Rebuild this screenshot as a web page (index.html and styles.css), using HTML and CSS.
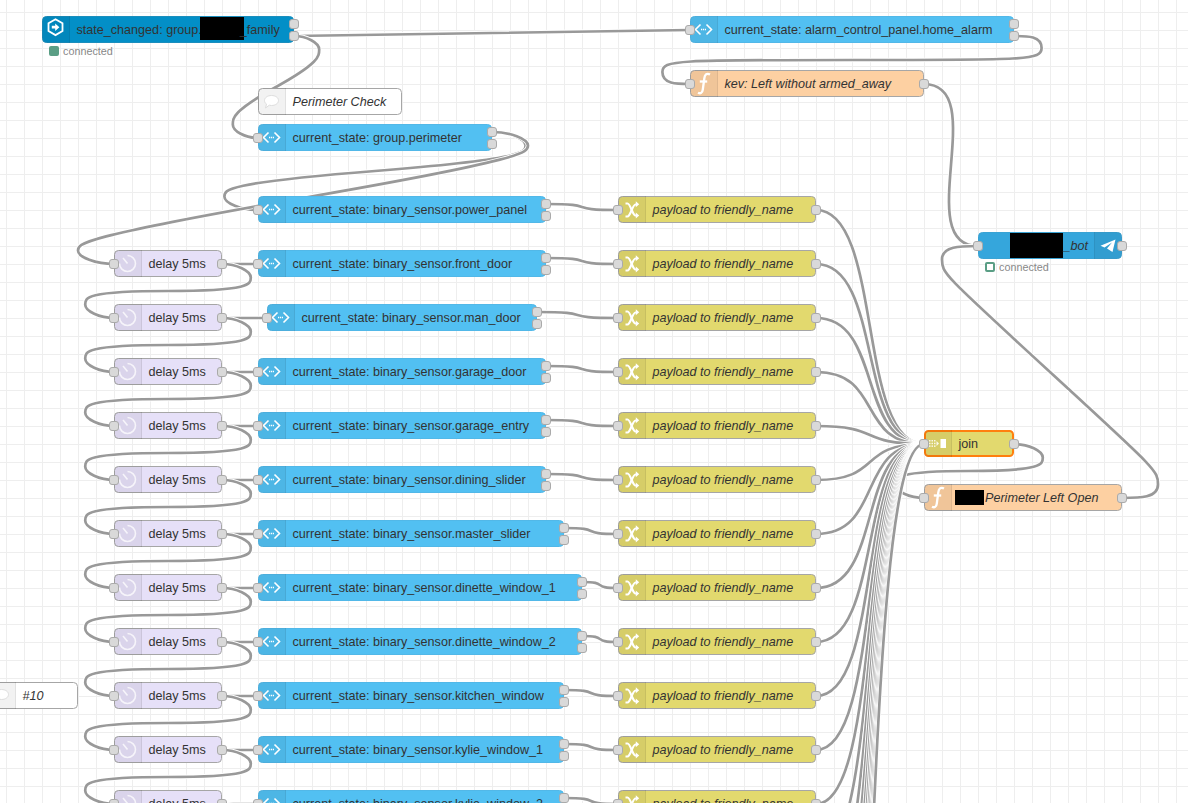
FILE: index.html
```html
<!DOCTYPE html>
<html lang="en">
<head>
    <meta charset="UTF-8">
    <title>Node-RED flow</title>
    <link rel="stylesheet" href="styles.css">
</head>
<body>
    <div id="workspace" class="workspace">
        <svg id="wires" class="wires" width="1188" height="803"></svg>
    </div>
    <script src="app.js"></script>
</body>
</html>
```

FILE: styles.css
```css
html, body {
    margin: 0;
    height: 100%;
    overflow: hidden;
}
.workspace {
    position: relative;
    width: 1188px;
    height: 803px;
    overflow: hidden;
    background-color: #fff;
    background-image:
        linear-gradient(to right, #eee 1px, transparent 1px),
        linear-gradient(to bottom, #eee 1px, transparent 1px);
    background-size: 18px 18px;
    background-position: 6px 12px;
    font-family: "Liberation Sans", Arial, sans-serif;
    font-size: 12.6px;
    color: #333;
}
.wires {
    position: absolute;
    left: 0;
    top: 0;
}
.wire-outline {
    fill: none;
    stroke: #fff;
    stroke-width: 4.5;
}
.wire-line {
    fill: none;
    stroke: #999;
    stroke-width: 2.7;
}
.node {
    position: absolute;
    height: 27px;
    box-sizing: border-box;
    border: 1px solid #a6a6a6;
    border-radius: 4.5px;
    display: flex;
    align-items: center;
}
.node-events { background: #038fc7; border-color: #1b8ebd; }
.node-state { background: #52c0f2; border-color: #52b8e8; }
.node-bot { background: #35a6dc; border-color: #3aa3d4; }
.node-delay { background: #e6e0f8; }
.node-change { background: #e2d96e; }
.node-function { background: #fdd0a2; }
.node-comment { background: #fff; }
.node-selected {
    border: 2px solid #ff7f0e;
}
.icon {
    position: absolute;
    left: -1px;
    top: -1px;
    width: 27px;
    height: 27px;
    background: rgba(0, 0, 0, 0.05);
    border-right: 1px solid rgba(0, 0, 0, 0.07);
    border-radius: 4.5px 0 0 4.5px;
}
.node-selected .icon {
    left: -2px;
    top: -2px;
}
.icon-right {
    left: auto;
    right: -1px;
    border-right: 0;
    border-left: 1px solid rgba(0, 0, 0, 0.07);
    border-radius: 0 4.5px 4.5px 0;
}
.icon svg {
    display: block;
}
.label {
    display: flex;
    align-items: center;
    padding-left: 33.5px;
    padding-top: 1px;
    white-space: pre;
}
.node-selected .label {
    padding-left: 32.5px;
}
.label-right {
    margin-left: auto;
    padding-right: 33px;
    padding-left: 0;
}
.label-tight {
    padding-left: 30px;
}
.italic {
    font-style: italic;
}
.redact {
    background: #000;
}
.port {
    position: absolute;
    width: 10px;
    height: 10px;
    box-sizing: border-box;
    background: #d9d9d9;
    border: 1px solid #aaa;
    border-radius: 3px;
}
.status {
    position: absolute;
    display: flex;
    align-items: center;
    gap: 4px;
    height: 10px;
    font-size: 10.8px;
    color: #888;
}
.status-dot {
    width: 10px;
    height: 10px;
    box-sizing: border-box;
    border: 2px solid #5a9e85;
    border-radius: 2px;
    background: #5a9e85;
}
.status-ring {
    background: #fff;
}
```

FILE: app.js
```js
// node-red flow drawn from data, wires use the editor's own bezier maths
var NODE_W = 90, NODE_H = 27;

var icons = {
    inject: '<path d="M13.500 3.200l7 4v7.900l-7 4-7-4V7.200z" fill="none" stroke="#fff" stroke-width="1.800"/><path d="M9.800 9.800h3.400V7.500l4.200 3.700-4.200 3.700v-2.300H9.800z" fill="#fff"/>',
    api: '<path d="M10.500 8.500L5.500 13.500l5 5M16.500 8.500l5 5-5 5" fill="none" stroke="#fff" stroke-width="1.600"/><path d="M11 13.500h5" stroke="#fff" stroke-width="1.300" stroke-dasharray="1.200 .7"/>',
    delay: '<g fill="none" stroke="#fff" stroke-opacity=".75" stroke-width="1.600"><path d="M13.500 5.500A8 8 0 1 1 5.500 13.500"/><path d="M13.500 13.500L9 8"/></g>',
    change: '<g fill="none" stroke="#fff" stroke-width="2.200"><path d="M7.500 7.500h2c3 0 5 12 8 12h1"/><path d="M7.500 20.500h2c3 0 5-12 8-12h1"/></g><path d="M17.800 5.200l3.400 3-3.400 3zM17.800 16.500l3.400 3-3.400 3z" fill="#fff"/>',
    func: '<g fill="none" stroke="#fff" stroke-width="2.300"><path d="M20 4.500C16.500 2.600 14.700 5 14.300 8.500l-1.500 11c-.4 3.500-2.300 4.500-4.800 3.200"/><path d="M9.800 11.500h7.400"/></g>',
    comment: '<path d="M13.500 7.500c3.900 0 7 2.200 7 5s-3.100 5-7 5c-.8 0-1.500-.1-2.200-.3L7.500 20l1-3.900c-1.300-.9-2-2.200-2-3.600 0-2.800 3.100-5 7-5z" fill="#fff" stroke="#ddd"/>',
    join: '<g fill="#fff" fill-opacity=".85"><rect x="5" y="10" width="1.500" height="1.500"/><rect x="7.500" y="10" width="1.500" height="1.500"/><rect x="10" y="10" width="1.500" height="1.500"/><rect x="5" y="12.700" width="1.500" height="1.500"/><rect x="7.500" y="12.700" width="1.500" height="1.500"/><rect x="10" y="12.700" width="1.500" height="1.500"/><rect x="5" y="15.400" width="1.500" height="1.500"/><rect x="7.500" y="15.400" width="1.500" height="1.500"/><rect x="10" y="15.400" width="1.500" height="1.500"/><path d="M12.500 11l2.500 2.500-2.500 2.500z"/></g><rect x="16.500" y="9" width="5.500" height="9" fill="#fff"/>',
    telegram: '<path d="M20.500 7.500L5.500 13.800l4 1.700 7.500-5-5 6 5.500 3.500z" fill="#fff"/>'
};

var workspace = document.getElementById('workspace');
var wirePaths = [];

function addNode(o) {
    var el = document.createElement('div');
    el.className = 'node node-' + o.kind + (o.selected ? ' node-selected' : '');
    el.style.left = o.x + 'px';
    el.style.top = (o.c - 14) + 'px';
    el.style.width = o.w + 'px';

    var icon = document.createElement('div');
    icon.className = 'icon' + (o.iconRight ? ' icon-right' : '');
    icon.innerHTML = '<svg width="27" height="27" viewBox="0 0 27 27">' + icons[o.icon] + '</svg>';
    el.appendChild(icon);

    var label = document.createElement('div');
    label.className = 'label' + (o.italic ? ' italic' : '') + (o.iconRight ? ' label-right' : '') + (o.tight ? ' label-tight' : '');
    o.text.forEach(function (part) {
        if (typeof part === 'string') {
            var t = document.createElement('span');
            t.textContent = part;
            label.appendChild(t);
        } else {
            var r = document.createElement('span');
            r.className = 'redact';
            r.style.width = part.w + 'px';
            r.style.height = part.h + 'px';
            r.style.margin = part.margin || '0';
            label.appendChild(r);
        }
    });
    el.appendChild(label);
    workspace.appendChild(el);

    if (o.input) addPort(o.x, o.c);
    (o.outputs || []).forEach(function (dy) {
        addPort(o.x + o.w, o.c + dy);
    });
}

function addPort(x, y) {
    var p = document.createElement('div');
    p.className = 'port';
    p.style.left = (x - 5) + 'px';
    p.style.top = (y - 5) + 'px';
    workspace.appendChild(p);
}

function addStatus(x, y, ring) {
    var s = document.createElement('div');
    s.className = 'status';
    s.style.left = x + 'px';
    s.style.top = y + 'px';
    s.innerHTML = '<span class="status-dot' + (ring ? ' status-ring' : '') + '"></span><span>connected</span>';
    workspace.appendChild(s);
}

function wire(ox, oy, dx0, dy0) {
    var dy = dy0 - oy, dx = dx0 - ox;
    var delta = Math.sqrt(dy * dy + dx * dx);
    var scale = 0.75;
    var d;
    if (dx > 0) {
        if (delta < NODE_W) scale = 0.75 - 0.75 * ((NODE_W - delta) / NODE_W);
        d = 'M' + ox + ' ' + oy + ' C' + (ox + NODE_W * scale) + ' ' + oy + ' ' + (dx0 - NODE_W * scale) + ' ' + dy0 + ' ' + dx0 + ' ' + dy0;
    } else {
        scale = 0.4 - 0.2 * Math.max(0, (NODE_W - Math.min(Math.abs(dx), Math.abs(dy))) / NODE_W);
        var midX = Math.floor(dx0 - dx / 2);
        var midY = Math.floor(dy0 - dy / 2);
        if (dy === 0) midY = dy0 + NODE_H;
        var cp = NODE_H / 2;
        var y1 = (dy0 + midY) / 2;
        var topX = ox + NODE_W * scale;
        var topY = dy > 0 ? Math.min(y1 - dy / 2, oy + cp) : Math.max(y1 - dy / 2, oy - cp);
        var botX = dx0 - NODE_W * scale;
        var botY = dy > 0 ? Math.max(y1, dy0 - cp) : Math.min(y1, dy0 + cp);
        var x1 = (ox + topX) / 2;
        var scy = dy > 0 ? 1 : -1;
        var c1 = [topX, dy > 0 ? Math.max(oy, topY - cp) : Math.min(oy, topY + cp)];
        var c2 = [x1, dy > 0 ? Math.min(midY, topY + cp) : Math.max(midY, topY - cp)];
        var c3 = [botX, dy > 0 ? Math.max(midY, botY - cp) : Math.min(midY, botY + cp)];
        if (c2[1] === topY + scy * cp) {
            if (Math.abs(dy) < cp * 10) {
                c1[1] = topY - scy * cp / 2;
                c3[1] = botY - scy * cp / 2;
            }
            c2[0] = topX;
        }
        d = 'M' + ox + ' ' + oy + ' C' + x1 + ' ' + oy + ' ' + c1.join(' ') + ' ' + topX + ' ' + topY +
            ' S' + c2.join(' ') + ' ' + midX + ' ' + midY +
            ' S' + c3.join(' ') + ' ' + botX + ' ' + botY +
            ' S' + ((dx0 + botX) / 2) + ' ' + dy0 + ' ' + dx0 + ' ' + dy0;
    }
    wirePaths.push('<path class="wire-outline" d="' + d + '"/><path class="wire-line" d="' + d + '"/>');
}

// sensor rows, the first has no delay in front of it
var rows = [
    { name: 'power_panel', x: 258, end: 546 },
    { name: 'front_door', x: 258, end: 546 },
    { name: 'man_door', x: 267, end: 537 },
    { name: 'garage_door', x: 258, end: 546 },
    { name: 'garage_entry', x: 258, end: 546 },
    { name: 'dining_slider', x: 258, end: 546 },
    { name: 'master_slider', x: 258, end: 564 },
    { name: 'dinette_window_1', x: 258, end: 582 },
    { name: 'dinette_window_2', x: 258, end: 582 },
    { name: 'kitchen_window', x: 258, end: 564 },
    { name: 'kylie_window_1', x: 258, end: 564 },
    { name: 'kylie_window_2', x: 258, end: 564 }
];
var HIDDEN_ROWS = 10; // rest of the flow, below the fold
var JOIN_IN = [924, 444];

// wires first, they sit under the nodes
wire(294, 36, 690, 30);
wire(294, 36, 258, 138);
wire(1014, 36, 690, 84);
wire(924, 84, 978, 246);
wire(492, 132, 258, 210);
wire(492, 132, 114, 264);
wire(1014, 444, 924, 498);
wire(1122, 498, 978, 246);

rows.forEach(function (r, i) {
    var c = 210 + i * 54;
    if (i > 0) {
        wire(222, c, r.x, c);
        wire(222, c, 114, c + 54);
    }
    wire(r.end, c - 6, 618, c);
});
for (var i = 0; i < rows.length + HIDDEN_ROWS; i++) {
    wire(816, 210 + i * 54, JOIN_IN[0], JOIN_IN[1]);
}
document.getElementById('wires').innerHTML = wirePaths.join('');

addNode({ kind: 'events', icon: 'inject', x: 42, c: 30, w: 252, outputs: [-6, 6],
    text: ['state_changed: group.', { w: 44, h: 23, margin: '-3px -4px 0 -2px' }, '_family'] });
addNode({ kind: 'state', icon: 'api', x: 690, c: 30, w: 324, input: true, outputs: [-6, 6],
    text: ['current_state: alarm_control_panel.home_alarm'] });
addNode({ kind: 'function', icon: 'func', x: 690, c: 84, w: 234, input: true, outputs: [0], italic: true,
    text: ['kev: Left without armed_away'] });
addNode({ kind: 'comment', icon: 'comment', x: 258, c: 102, w: 144, italic: true,
    text: ['Perimeter Check'] });
addNode({ kind: 'state', icon: 'api', x: 258, c: 138, w: 234, input: true, outputs: [-6, 6],
    text: ['current_state: group.perimeter'] });
addNode({ kind: 'comment', icon: 'comment', x: -12, c: 696, w: 90, italic: true,
    text: ['#10'] });
addNode({ kind: 'bot', icon: 'telegram', iconRight: true, x: 978, c: 246, w: 144, input: true, outputs: [0], italic: true,
    text: [{ w: 53, h: 25, margin: '-2px 0 0 0' }, '_bot'] });
addNode({ kind: 'change', icon: 'join', x: 924, c: 444, w: 90, input: true, outputs: [0], selected: true,
    text: ['join'] });
addNode({ kind: 'function', icon: 'func', x: 924, c: 498, w: 198, input: true, outputs: [0], italic: true, tight: true,
    text: [{ w: 29, h: 15, margin: '-2px 1px 0 0' }, 'Perimeter Left Open'] });

rows.forEach(function (r, i) {
    var c = 210 + i * 54;
    if (i > 0) {
        addNode({ kind: 'delay', icon: 'delay', x: 114, c: c, w: 108, input: true, outputs: [0],
            text: ['delay 5ms'] });
    }
    addNode({ kind: 'state', icon: 'api', x: r.x, c: c, w: r.end - r.x, input: true, outputs: [-6, 6],
        text: ['current_state: binary_sensor.' + r.name] });
    addNode({ kind: 'change', icon: 'change', x: 618, c: c, w: 198, input: true, outputs: [0], italic: true,
        text: ['payload to friendly_name'] });
});

addStatus(49, 46);
addStatus(985, 262, true);
```
